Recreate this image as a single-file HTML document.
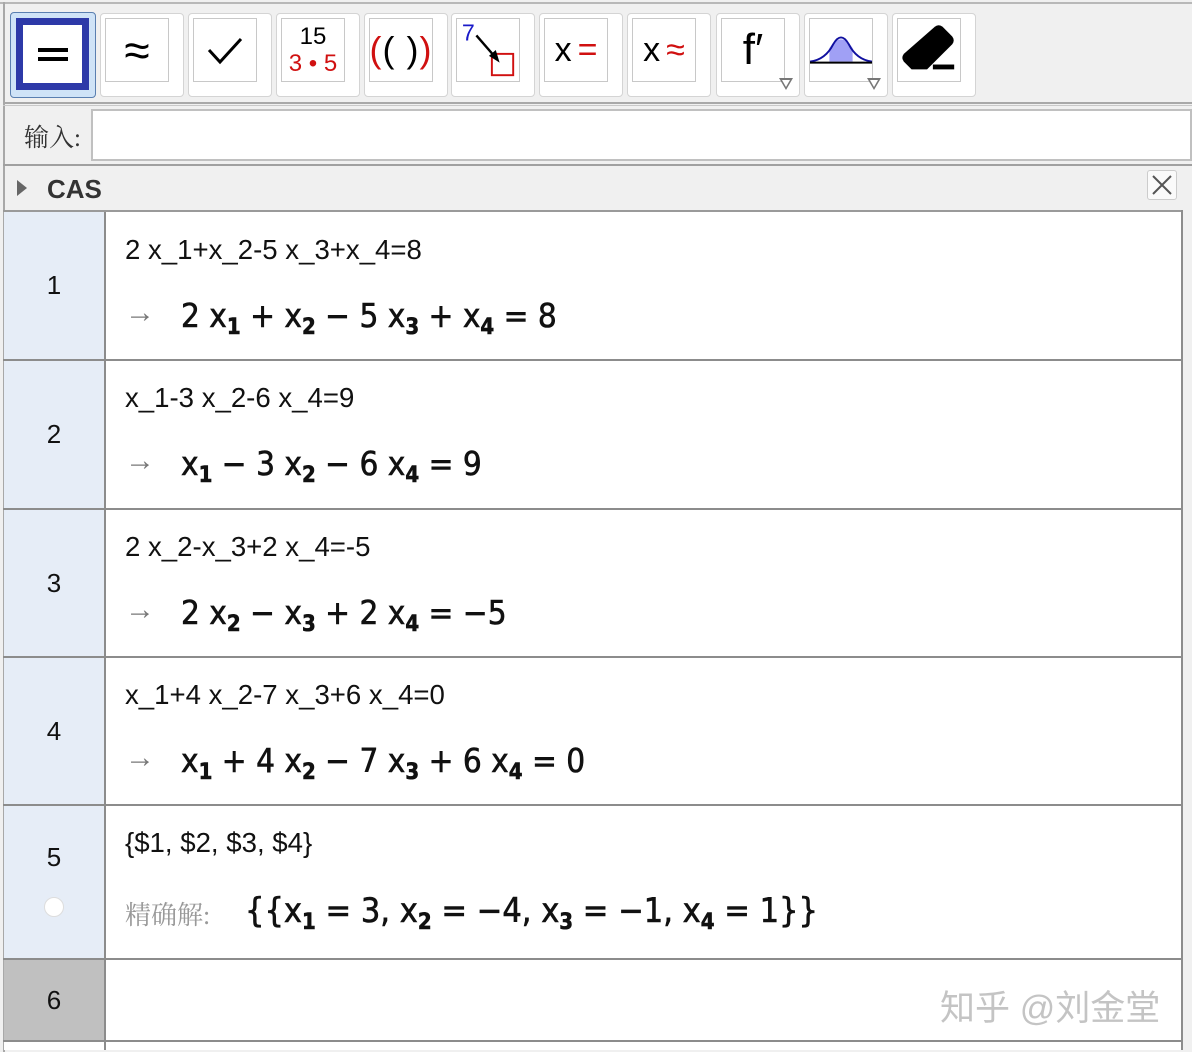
<!DOCTYPE html>
<html><head><meta charset="utf-8">
<style>
*{margin:0;padding:0;box-sizing:border-box}
body{width:1192px;height:1050px;background:#f0f0f0;position:relative;overflow:hidden;font-family:"Liberation Sans","Noto Sans CJK SC",sans-serif}
.a{position:absolute}
.btn{position:absolute;top:13px;width:84px;height:84px;background:#fff;border:1px solid #d4d4d4;border-radius:4px}
.ib{position:absolute;left:4px;top:4px;width:64px;height:64px;border:1px solid #c8c8c8;background:#fff;display:flex;align-items:center;justify-content:center}
.tri{position:absolute;right:6px;bottom:6px;width:0;height:0;border-left:7px solid transparent;border-right:7px solid transparent;border-top:12px solid #777}
.tri::after{content:"";position:absolute;left:-4px;top:-10px;border-left:4px solid transparent;border-right:4px solid transparent;border-top:7px solid #fff}
.lab{position:absolute;left:4px;width:100px;background:#e6edf7;font-size:26px;color:#111;display:flex;align-items:center;justify-content:center}
.sep{position:absolute;left:3px;width:1179px;height:2px;background:#8c8c8c}
.in{position:absolute;left:125px;font-size:27.6px;color:#111;white-space:nowrap}
.res{position:absolute;left:125px;white-space:nowrap;font-size:33px;color:#111;display:flex;align-items:center}
.ar{color:#777;font-size:30px;display:inline-block;width:56px;font-weight:bold;position:relative;top:-5px}
.m{font-family:"DejaVu Sans Condensed","Liberation Sans",sans-serif;font-weight:normal;-webkit-text-stroke:0.6px #111}
.m sub{font-size:22px;vertical-align:-7px;font-weight:bold}
</style></head><body>
<div class="a" style="left:0;top:2px;width:1192px;height:2px;background:#b8b8b8"></div>
<div class="a" style="left:3px;top:2px;width:2px;height:1050px;background:#a8a8a8"></div>
<div class="btn" style="left:10px;top:12px;width:86px;height:86px;background:#cfe3f7;border:1px solid #5a7fb0">
 <div class="a" style="left:5px;top:5px;width:73px;height:72px;border:7px solid #2d39a8;background:#fff;display:flex;align-items:center;justify-content:center">
  <div style="width:30px;height:13px;border-top:4px solid #000;border-bottom:4px solid #000"></div></div></div>
<div class="btn" style="left:100px"><div class="ib" style="font-size:46px">≈</div></div>
<div class="btn" style="left:188px"><div class="ib"><svg width="40" height="40" viewBox="0 0 40 40"><path d="M4 20 L15 32 L36 9" fill="none" stroke="#000" stroke-width="3"/></svg></div></div>
<div class="btn" style="left:276px"><div class="ib" style="flex-direction:column;line-height:27px;font-size:24px"><span>15</span><span style="color:#d01010">3 • 5</span></div></div>
<div class="btn" style="left:364px"><div class="ib" style="font-size:36px;letter-spacing:1px"><span style="color:#d01010">(</span>(&nbsp;)<span style="color:#d01010">)</span></div></div>
<div class="btn" style="left:451px"><div class="ib"><svg width="64" height="64" viewBox="0 0 64 64"><text x="5" y="22" font-size="24" fill="#1a1ac8" font-family="Liberation Sans">7</text><rect x="36" y="36" width="22" height="22" fill="none" stroke="#d01010" stroke-width="2"/><path d="M20 17 L40 40" stroke="#000" stroke-width="2.5"/><path d="M33 38 L44 45 L40 32 Z" fill="#000"/></svg></div></div>
<div class="btn" style="left:539px"><div class="ib" style="font-size:34px">x<span style="color:#d01010;margin-left:6px">=</span></div></div>
<div class="btn" style="left:627px"><div class="ib" style="font-size:34px">x<span style="color:#d01010;margin-left:6px">≈</span></div></div>
<div class="btn" style="left:716px"><div class="ib" style="font-size:44px">f′</div><div class="tri"></div></div>
<div class="btn" style="left:804px"><div class="ib"><svg width="64" height="64" viewBox="0 0 64 64"><path d="M20 44 L20 30 Q32 12 44 30 L44 44 Z" fill="#a0a0f5"/><path d="M0 44 Q16 42 24 26 Q32 12 40 26 Q48 42 64 44" fill="none" stroke="#1010a0" stroke-width="2"/><path d="M0 45 H64" stroke="#000" stroke-width="2"/></svg></div><div class="tri"></div></div>
<div class="btn" style="left:892px"><div class="ib"><svg width="64" height="64" viewBox="0 0 64 64"><path d="M38 8 Q42 5 46 8 L56 18 Q59 22 56 26 L30 52 L14 52 L6 44 Q3 40 6 36 Z" fill="#000"/><rect x="36" y="47" width="22" height="5" fill="#000"/></svg></div></div>
<div class="a" style="left:3px;top:102px;width:1189px;height:2px;background:#a8a8a8"></div>
<div class="a" style="left:3px;top:105px;width:1189px;height:1px;background:#c8c8c8"></div>
<div class="a" style="left:24px;top:118px;font-size:25px;color:#333;font-family:'Liberation Serif','Noto Serif CJK SC',serif">输入:</div>
<div class="a" style="left:91px;top:109px;width:1101px;height:52px;background:#fff;border:2px solid #c0c0c0"></div>
<div class="a" style="left:3px;top:164px;width:1189px;height:2px;background:#a0a0a0"></div>
<div class="a" style="left:17px;top:180px;width:0;height:0;border-top:8px solid transparent;border-bottom:8px solid transparent;border-left:10px solid #666"></div>
<div class="a" style="left:47px;top:174px;font-size:26px;font-weight:bold;color:#333">CAS</div>
<div class="a" style="left:1147px;top:170px;width:30px;height:30px;border:1px solid #ccc;border-radius:3px;background:#fafafa"><svg width="28" height="28" viewBox="0 0 28 28"><path d="M5 5 L23 23 M23 5 L5 23" stroke="#555" stroke-width="2"/></svg></div>
<div class="a" style="left:3px;top:210px;width:1180px;height:2px;background:#9a9a9a"></div>
<div class="a" style="left:4px;top:212px;width:1177px;height:838px;background:#fff"></div>
<div class="a" style="left:1181px;top:210px;width:2px;height:840px;background:#8c8c8c"></div>
<div class="a" style="left:1183px;top:210px;width:9px;height:840px;background:#f0f0f0"></div>
<div class="lab" style="top:212px;height:147px">1</div>
<div class="lab" style="top:361px;height:147px">2</div>
<div class="lab" style="top:510px;height:146px">3</div>
<div class="lab" style="top:658px;height:146px">4</div>
<div class="lab" style="top:806px;height:152px;flex-direction:column;justify-content:flex-start;padding-top:36px">5<div style="margin-top:24px;width:20px;height:20px;border-radius:50%;border:1px solid #ddd;background:#fff"></div></div>
<div class="lab" style="top:960px;height:80px;background:#c0c0c0">6</div>
<div class="a" style="left:104px;top:212px;width:2px;height:838px;background:#8c8c8c"></div>
<div class="sep" style="top:359px"></div>
<div class="sep" style="top:508px"></div>
<div class="sep" style="top:656px"></div>
<div class="sep" style="top:804px"></div>
<div class="sep" style="top:958px"></div>
<div class="sep" style="top:1040px"></div>
<div class="in" style="top:234px">2 x_1+x_2-5 x_3+x_4=8</div>
<div class="res" style="top:296px"><span class="ar">→</span><span class="m">2 x<sub>1</sub> + x<sub>2</sub> − 5 x<sub>3</sub> + x<sub>4</sub> = 8</span></div>
<div class="in" style="top:382px">x_1-3 x_2-6 x_4=9</div>
<div class="res" style="top:444px"><span class="ar">→</span><span class="m">x<sub>1</sub> − 3 x<sub>2</sub> − 6 x<sub>4</sub> = 9</span></div>
<div class="in" style="top:531px">2 x_2-x_3+2 x_4=-5</div>
<div class="res" style="top:593px"><span class="ar">→</span><span class="m">2 x<sub>2</sub> − x<sub>3</sub> + 2 x<sub>4</sub> = −5</span></div>
<div class="in" style="top:679px">x_1+4 x_2-7 x_3+6 x_4=0</div>
<div class="res" style="top:741px"><span class="ar">→</span><span class="m">x<sub>1</sub> + 4 x<sub>2</sub> − 7 x<sub>3</sub> + 6 x<sub>4</sub> = 0</span></div>
<div class="in" style="top:827px">{$1, $2, $3, $4}</div>
<div class="res" style="top:891px"><span style="color:#999;font-size:26px;font-family:'Liberation Serif','Noto Serif CJK SC',serif;display:inline-block;width:120px">精确解:</span><span class="m" style="font-size:34px">{{x<sub>1</sub> = 3, x<sub>2</sub> = −4, x<sub>3</sub> = −1, x<sub>4</sub> = 1}}</span></div>
<div class="a" style="left:940px;top:980px;font-size:35px;color:#c4c4c4;white-space:nowrap">知乎 @刘金堂</div>
</body></html>
